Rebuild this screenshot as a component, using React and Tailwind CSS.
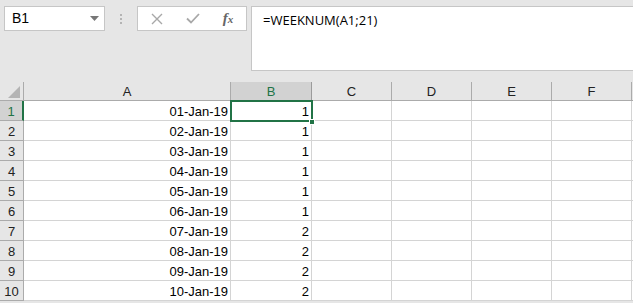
import React from "react";

const cols = [
  { k: "A", w: "w-[207px]" },
  { k: "B", w: "w-[81px]" },
  { k: "C", w: "w-[80px]" },
  { k: "D", w: "w-[80px]" },
  { k: "E", w: "w-[80px]" },
  { k: "F", w: "w-[80px]" },
];

const rows = [
  ["01-Jan-19", "1"],
  ["02-Jan-19", "1"],
  ["03-Jan-19", "1"],
  ["04-Jan-19", "1"],
  ["05-Jan-19", "1"],
  ["06-Jan-19", "1"],
  ["07-Jan-19", "2"],
  ["08-Jan-19", "2"],
  ["09-Jan-19", "2"],
  ["10-Jan-19", "2"],
];

export default function App() {
  return (
    <div className="w-[633px] h-[303px] overflow-hidden bg-[#e6e6e6] text-black" style={{ fontFamily: "'Liberation Sans', Arial, sans-serif" }}>
      {/* Top bar */}
      <div className="h-[82px] flex items-start pt-[6px] pl-[4px]">
        <div className="w-[101px] h-[25px] bg-white border border-[#c6c6c6] flex items-center justify-between pl-[7px] pr-[5px] text-[14px]">
          <span>B1</span>
          <svg width="9" height="5" viewBox="0 0 9 5"><path d="M0 0h9L4.5 5z" fill="#777" /></svg>
        </div>
        <div className="w-[32px] h-[25px] flex flex-col items-center justify-center gap-[2px]">
          <div className="w-[2px] h-[2px] bg-[#b4b4b4]" />
          <div className="w-[2px] h-[2px] bg-[#b4b4b4]" />
          <div className="w-[2px] h-[2px] bg-[#b4b4b4]" />
        </div>
        <div className="w-[110px] h-[25px] bg-white border border-[#c6c6c6] flex items-center">
          <div className="w-[38px] flex justify-center">
            <svg width="12" height="12" viewBox="0 0 12 12"><path d="M1 1L11 11M11 1L1 11" stroke="#a8a8a8" strokeWidth="1.4" /></svg>
          </div>
          <div className="w-[34px] flex justify-center">
            <svg width="14" height="11" viewBox="0 0 14 11"><path d="M1 5.5L5 9.5L13 1" stroke="#a8a8a8" strokeWidth="1.8" fill="none" /></svg>
          </div>
          <div className="w-[36px] flex items-baseline justify-center text-[#666] italic font-bold leading-none" style={{ fontFamily: "'Liberation Serif', serif" }}>
            <span className="text-[15px]">f</span>
            <span className="text-[11px]">x</span>
          </div>
        </div>
        <div className="ml-[4px] flex-1 h-[65px] bg-white border-y border-l border-[#c6c6c6] pl-[11px] pt-[4px] text-[13px]" style={{ fontFamily: "'Open Sans', sans-serif" }}>
          =WEEKNUM(A1;21)
        </div>
      </div>

      {/* Grid */}
      <div className="relative text-[13px]">
        {/* Column header */}
        <div className="flex h-[19px] border-b border-[#ababab]">
          <div className="w-[24px] border-r border-[#ababab] relative">
            <svg className="absolute right-[3px] bottom-[2px]" width="12" height="12" viewBox="0 0 12 12"><path d="M12 0V12H0z" fill="#b4b4b4" /></svg>
          </div>
          {cols.map((c) => (
            <div
              key={c.k}
              className={`${c.w} shrink-0 flex items-center justify-center pt-[1px] border-r ${c.k === "B" ? "bg-[#d2d2d2] text-[#217346] border-[#9b9b9b]" : "border-[#ababab] text-[#222]"}`}
            >
              {c.k}
            </div>
          ))}
        </div>
        {rows.map((r, i) => (
          <div key={i} className="flex h-[20px]">
            <div className={`w-[24px] shrink-0 flex items-center justify-center pt-[2px] border-b border-r ${i === 0 ? "bg-[#d2d2d2] text-[#217346] border-b-[#ababab] border-r-[#217346] border-r-2" : "border-[#ababab] text-[#222]"}`}>
              {i + 1}
            </div>
            <div className="w-[207px] shrink-0 bg-white border-b border-r border-[#d4d4d4] flex items-center justify-end pr-[2px] pt-[2px]">{r[0]}</div>
            <div className="w-[81px] shrink-0 bg-white border-b border-r border-[#d4d4d4] flex items-center justify-end pr-[2px] pt-[2px]">{r[1]}</div>
            <div className="w-[80px] shrink-0 bg-white border-b border-r border-[#d4d4d4]" />
            <div className="w-[80px] shrink-0 bg-white border-b border-r border-[#d4d4d4]" />
            <div className="w-[80px] shrink-0 bg-white border-b border-r border-[#d4d4d4]" />
            <div className="w-[80px] shrink-0 bg-white border-b border-r border-[#d4d4d4]" />
            <div className="flex-1 bg-white border-b border-[#d4d4d4]" />
          </div>
        ))}
        {/* Selection */}
        <div className="absolute left-[230px] top-[18px] w-[83px] h-[22px] border-2 border-[#217346]" />
        <div className="absolute left-[309px] top-[37px] w-[6px] h-[6px] bg-[#217346] border border-white" />
      </div>
    </div>
  );
}
